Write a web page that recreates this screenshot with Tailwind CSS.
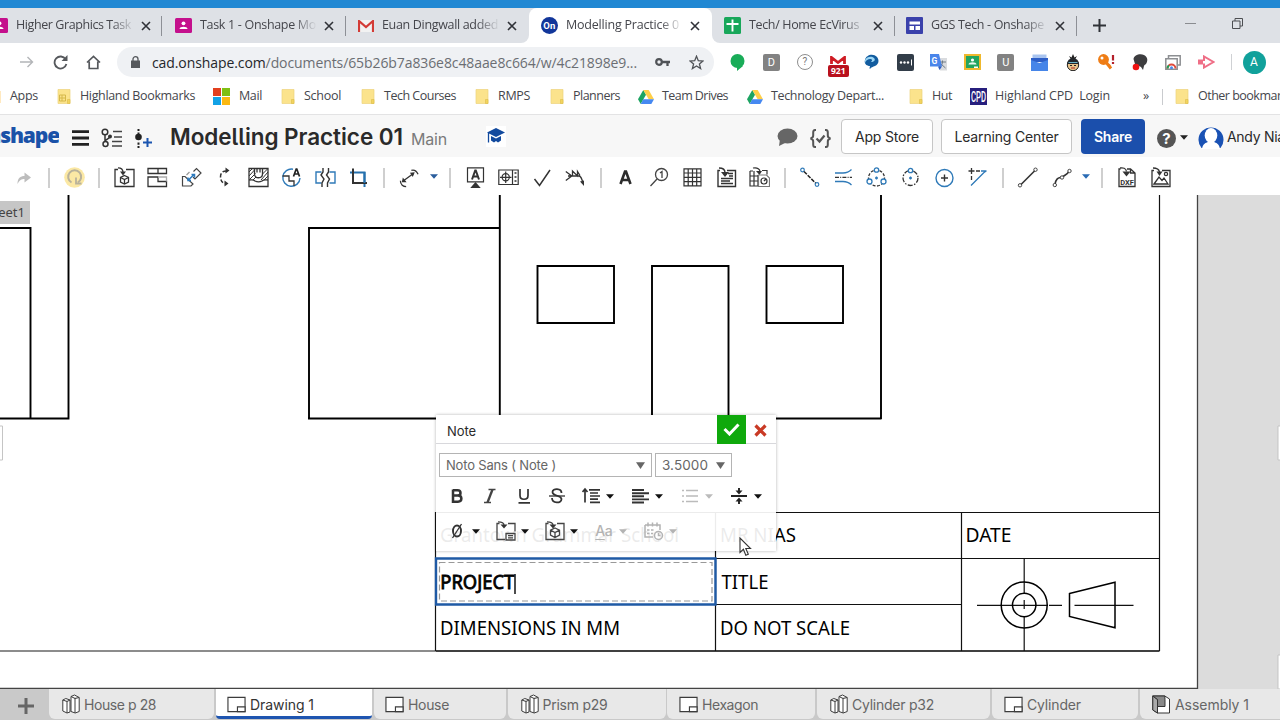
<!DOCTYPE html>
<html lang="en">
<head>
<meta charset="utf-8">
<title>Modelling Practice 01</title>
<script src="https://cdn.jsdelivr.net/npm/@tailwindcss/browser@4"></script>
</head>
<body class="w-[1280px] h-[720px] overflow-hidden bg-white flex flex-col font-['Open_Sans','Noto_Sans',sans-serif] text-[#45464c]">

<svg class="hidden">
  <defs>
    <symbol id="x" viewBox="0 0 10 10"><path d="M1 1l8 8M9 1L1 9" stroke="#303238" stroke-width="1.6" fill="none"/></symbol>
    <symbol id="folder" viewBox="0 0 14 16"><path d="M1 .5h12v14H1z" fill="#fbe38c" stroke="#ecd27c" stroke-width=".7"/><path d="M10.500 10.500h2.500v4h-2.500z" fill="#f3d45e" stroke="#dcbc4a" stroke-width=".6"/></symbol>
    <symbol id="drive" viewBox="0 0 16 14"><path d="M5.300 0L0 9.300 2.700 14 8 4.700z" fill="#1da462"/><path d="M5.300 0h5.400L16 9.300h-5.300z" fill="#ffcf48"/><path d="M5.300 9.300H16L13.300 14H2.700z" fill="#4688f1"/></symbol>
    <symbol id="caret" viewBox="0 0 8 5"><path d="M0 .3h8L4 4.700z" fill="currentColor"/></symbol>
    <symbol id="classroom" viewBox="0 0 17 15"><rect width="17" height="15" rx="1.500" fill="#c4108c"/><circle cx="8.500" cy="5.300" r="1.900" fill="#fff"/><path d="M4.500 11c0-3 8-3 8 0z" fill="#fff"/></symbol>
    <symbol id="sheet" viewBox="0 0 20 17"><path d="M1 1h18v15H1z" fill="#fff" stroke="#3c3c3c" stroke-width="1.200"/><path d="M11 16v-5h8v5z" fill="#fff" stroke="#3c3c3c" stroke-width="1.200"/></symbol>
    <symbol id="parts" viewBox="0 0 18 20"><path d="M.8 6l3-1.500L8 6v12l-3 1-4.200-2zM.8 6L5 7.500 8 6M5 7.500V19" fill="#fff" stroke="#3c3c3c"/><path d="M9 2.500L12.500 1 17.200 3.500v14l-4 1.500L9 17.500zM9 2.500l4 2 4.200-1M13 4.500V19" fill="#fff" stroke="#3c3c3c"/></symbol>
  </defs>
</svg>

<!-- window edge -->
<div class="h-[8px] shrink-0 bg-[#2188d3]"></div>

<!-- tab strip -->
<div class="h-[35px] shrink-0 bg-[#dee1e6] flex text-[12.5px]">
  <div class="w-[163px] flex items-center relative border-r border-transparent">
    <svg class="w-[17px] h-[15px] -ml-[9px] shrink-0"><use href="#classroom"/></svg>
    <div class="ml-2 w-[119px] overflow-hidden whitespace-nowrap [mask-image:linear-gradient(90deg,#000_80%,transparent_100%)]"><span data-w="115">Higher Graphics Task</span></div>
    <svg class="w-[10px] h-[10px] ml-[6px] shrink-0"><use href="#x"/></svg>
    <div class="ml-auto w-px h-5 bg-[#8d9096]"></div>
  </div>
  <div class="w-[183px] flex items-center">
    <svg class="w-[17px] h-[15px] ml-[12px] shrink-0"><use href="#classroom"/></svg>
    <div class="ml-2 w-[117px] overflow-hidden whitespace-nowrap [mask-image:linear-gradient(90deg,#000_80%,transparent_100%)]"><span data-w="116">Task 1 - Onshape Mo</span></div>
    <svg class="w-[10px] h-[10px] ml-[7px] shrink-0"><use href="#x"/></svg>
    <div class="ml-auto w-px h-5 bg-[#8d9096]"></div>
  </div>
  <div class="w-[183px] flex items-center bg-white">
   <div class="w-full h-full flex items-center bg-[#dee1e6] rounded-br-[8px]">
    <svg class="w-[16px] h-[12px] ml-[12px] shrink-0" viewBox="0 0 16 12"><path d="M0 0h16v12H0z" fill="#f2f2f2"/><path d="M1 12V1l7 6 7-6v11" fill="none" stroke="#d33b36" stroke-width="2.200"/></svg>
    <div class="ml-2 w-[118px] overflow-hidden whitespace-nowrap [mask-image:linear-gradient(90deg,#000_80%,transparent_100%)]"><span data-w="116">Euan Dingwall added</span></div>
    <svg class="w-[10px] h-[10px] ml-[7px] shrink-0"><use href="#x"/></svg>
   </div>
  </div>
  <div class="w-[183px] flex items-center bg-white rounded-t-[8px]">
    <svg class="w-[17px] h-[17px] ml-[12px] shrink-0" viewBox="0 0 17 17"><circle cx="8.500" cy="8.500" r="8.500" fill="#12369a"/><text x="8.300" y="12" text-anchor="middle" font-family="Roboto" font-weight="700" font-size="9.500" fill="#fff">On</text></svg>
    <div class="ml-[8px] w-[117px] overflow-hidden whitespace-nowrap [mask-image:linear-gradient(90deg,#000_80%,transparent_100%)]"><span data-w="113">Modelling Practice 0</span></div>
    <svg class="w-[10px] h-[10px] ml-[7px] shrink-0"><use href="#x"/></svg>
  </div>
  <div class="w-[183px] flex items-center bg-white">
   <div class="w-full h-full flex items-center bg-[#dee1e6] rounded-bl-[8px]">
    <svg class="w-[17px] h-[17px] ml-[12px] shrink-0" viewBox="0 0 17 17"><rect width="17" height="17" rx="1.500" fill="#18a75a"/><path d="M2.500 7h12M8.500 2.500v12" stroke="#fff" stroke-width="1.900"/></svg>
    <div class="ml-[8px] w-[117px] overflow-hidden whitespace-nowrap [mask-image:linear-gradient(90deg,#000_80%,transparent_100%)]"><span data-w="110">Tech/ Home EcVirus</span></div>
    <svg class="w-[10px] h-[10px] ml-[7px] shrink-0"><use href="#x"/></svg>
    <div class="ml-auto w-px h-5 bg-[#8d9096]"></div>
   </div>
  </div>
  <div class="w-[182px] flex items-center">
    <svg class="w-[17px] h-[17px] ml-[11px] shrink-0" viewBox="0 0 17 17"><rect width="17" height="17" rx="1" fill="#3a41ab"/><path d="M3.500 4.500h10.500v3H3.500zM3.500 9h4.500v4H3.500zM9.500 9h4.500v4H9.500z" fill="#fff"/></svg>
    <div class="ml-[8px] w-[117px] overflow-hidden whitespace-nowrap [mask-image:linear-gradient(90deg,#000_80%,transparent_100%)]"><span data-w="113">GGS Tech - Onshape</span></div>
    <svg class="w-[10px] h-[10px] ml-[7px] shrink-0"><use href="#x"/></svg>
    <div class="ml-auto w-px h-5 bg-[#8d9096]"></div>
  </div>
  <div class="flex-1 flex items-center">
    <svg class="w-[13px] h-[13px] ml-[16px]" viewBox="0 0 13 13"><path d="M6.500 0v13M0 6.500h13" stroke="#2f3237" stroke-width="2"/></svg>
    <svg class="w-[11px] h-[12px] ml-[79px]" viewBox="0 0 11 12"><path d="M0 3.500h11" stroke="#8a8c90"/></svg>
    <svg class="w-[11px] h-[11px] ml-[36px] mb-[5px]" viewBox="0 0 11 11"><path d="M.5 3h7.500v7.500H.5zM3 3V.5h7.500V8H8" fill="none" stroke="#4c4e52"/></svg>
  </div>
</div>

<!-- address bar -->
<div class="h-[38px] shrink-0 bg-white flex items-center">
  <svg class="w-[14px] h-[12px] ml-[20px]" viewBox="0 0 14 12"><path d="M0 6h12.500M7.500 1l5 5-5 5" fill="none" stroke="#b3b5b8" stroke-width="1.400"/></svg>
  <svg class="w-[15px] h-[15px] ml-[19px]" viewBox="0 0 15 15"><path d="M12.600 4.200A6 6 0 1 0 13.400 9" fill="none" stroke="#55585c" stroke-width="1.800"/><path d="M14.500 0v6H8.500z" fill="#55585c"/></svg>
  <svg class="w-[15px] h-[15px] ml-[18px]" viewBox="0 0 15 15"><path d="M1 7.500L7.500 1.500l6.500 6M3.200 6.500V13.500h8.600v-7" fill="none" stroke="#55585c" stroke-width="1.700"/></svg>
  <div class="ml-[16px] w-[597px] h-[30px] rounded-full bg-[#eff1f4] flex items-center shrink-0">
    <svg class="w-[9px] h-[12px] ml-[14px]" viewBox="0 0 9 12"><path d="M0 4.500h9V12H0z" fill="#55585c"/><path d="M2 5V3a2.500 2.300 0 0 1 5 0v2" fill="none" stroke="#55585c" stroke-width="1.300"/></svg>
    <div class="ml-[12px] w-[490px] text-[14px] text-[#6b6e73] whitespace-nowrap"><span data-w="485"><b class="font-normal text-[#24262a]">cad.onshape.com</b>/documents/65b26b7a836e8c48aae8c664/w/4c21898e9...</span></div>
    <svg class="w-[15px] h-[10px] ml-[13px]" viewBox="0 0 15 10"><circle cx="4" cy="5" r="2.800" fill="none" stroke="#505357" stroke-width="2.200"/><path d="M7 5h8M12.500 5v4" stroke="#505357" stroke-width="2.300"/></svg>
    <svg class="w-[15px] h-[15px] ml-[19px]" viewBox="0 0 15 15"><path d="M7.500 1.200l1.800 4.500 4.700.3-3.600 3 1.200 4.600-4.100-2.600-4.100 2.600L4.600 9 1 6l4.700-.3z" fill="none" stroke="#505357" stroke-width="1.300"/></svg>
  </div>
  <div class="ml-[7px] flex items-center text-[11px] text-white *:shrink-0">
    <div class="w-[33.5px] flex justify-center"><svg class="w-[15px] h-[17px]" viewBox="0 0 15 17"><circle cx="7.500" cy="7" r="7" fill="#19ac58"/><path d="M7 12h6l-6 5z" fill="#19ac58"/></svg></div>
    <div class="w-[33.5px] flex justify-center"><div class="size-[17px] bg-[#828282] rounded-[2px] grid place-items-center font-['Roboto'] leading-none">D</div></div>
    <div class="w-[33.5px] flex justify-center"><div class="size-[16px] border-[1.500px] border-[#8e8e8e] text-[#777] rounded-full grid place-items-center font-['Roboto'] text-[10px] leading-none">?</div></div>
    <div class="w-[33.5px] flex flex-col items-center pt-[8px]"><svg class="w-[16px] h-[8px]" viewBox="0 0 16 8"><path d="M1.500 8V1.500L8 6.500l6.500-5V8" fill="none" stroke="#cf1c24" stroke-width="2.800"/></svg><div class="w-[21px] h-[12px] bg-[#b9111d] rounded-[2px] text-[8.500px] font-bold text-center leading-[12px] font-['Open_Sans'] mt-px">921</div></div>
    <div class="w-[33.5px] flex justify-center"><svg class="w-[15px] h-[16px]" viewBox="0 0 15 16"><path d="M1 6C2 1 9-1 13 3c3 4 1 8-2 9-2 1-4 1-5 3-1-1 0-2 0-3-4 0-6-3-5-6z" fill="#125c9f"/><path d="M1 6c2-4 7-4 9-2s0 4-3 4c2-2 1-3-1-3S2 6 1 9z" fill="#9bd6f5"/></svg></div>
    <div class="w-[33.5px] flex justify-center"><svg class="size-[17px]" viewBox="0 0 17 17"><rect width="17" height="17" rx="2" fill="#323d49"/><circle cx="4" cy="8.500" r="1.200" fill="#fff"/><circle cx="7.500" cy="8.500" r="1.200" fill="#fff"/><circle cx="11" cy="8.500" r="1.200" fill="#fff"/><path d="M14.500 5.500v6" stroke="#fff"/></svg></div>
    <div class="w-[33.5px] flex justify-center"><svg class="size-[17px]" viewBox="0 0 17 17"><path d="M7 4h10v12.500H10z" fill="#d9dbde"/><path d="M9 8h7M12.500 6.500V8c0 3-2 4-3.500 5M11 10l4.500 4" stroke="#6f7a85" fill="none"/><path d="M0 0h9l3 12.500H0z" fill="#4a85ea"/><path d="M8 12.500h4L9.500 16z" fill="#2f5fc4"/><text x="1.500" y="9.500" font-family="Roboto" font-weight="700" font-size="8.500" fill="#fff">G</text></svg></div>
    <div class="w-[33.5px] flex justify-center"><svg class="w-[17px] h-[16px]" viewBox="0 0 17 16"><path d="M0 0h17v16H0z" fill="#efb82d"/><path d="M2 2h13v12H2z" fill="#22a45f"/><circle cx="8.500" cy="6" r="1.600" fill="#fff"/><path d="M4.500 10.500c0-3 8-3 8 0z" fill="#e8f6ee"/><path d="M10 12.500h4v1.500h-4z" fill="#fff"/></svg></div>
    <div class="w-[33.5px] flex justify-center"><div class="size-[17px] bg-[#828282] rounded-[2px] grid place-items-center font-['Roboto'] leading-none">U</div></div>
    <div class="w-[33.5px] flex justify-center"><svg class="w-[17px] h-[17px]" viewBox="0 0 17 17"><path d="M1.500 .5h14v4h-14z" fill="#a9c4ef"/><path d="M0 4h17v4H0z" fill="#2e5fc7"/><path d="M0 6l8.500 3L17 6v11H0z" fill="#4685e8"/></svg></div>
    <div class="w-[33.5px] flex justify-center"><svg class="w-[14px] h-[17px]" viewBox="0 0 14 17"><path d="M3 2l2.500 1.500L7 0l1.500 3.500L11 2 9 5.500H5z" fill="#222"/><circle cx="7" cy="11" r="5.700" fill="#e9c48b" stroke="#222"/><path d="M1 10a6 6 0 0 1 12 0z" fill="#23262a"/><path d="M2.500 8.500h9" stroke="#6bb3c8"/><path d="M5 14h4" stroke="#b02a20"/><path d="M4 11.500h2M8 11.500h2" stroke="#222"/></svg></div>
    <div class="w-[33.5px] flex justify-center"><svg class="w-[17px] h-[16px]" viewBox="0 0 17 16"><circle cx="5.500" cy="5.500" r="5.400" fill="#ef7d16"/><circle cx="4" cy="4" r="1.500" fill="#fff"/><path d="M7 7l6 7.500M10 13l2.500-2" stroke="#ef7d16" stroke-width="3"/><path d="M15 1v5.500M15 8v2" stroke="#b4202b" stroke-width="2.200"/></svg></div>
    <div class="w-[33.5px] flex justify-center"><svg class="w-[16px] h-[17px]" viewBox="0 0 16 17"><path d="M1.500 5C2 1 8-1 12 1c4 2 4 6 2 9-1 1-2 1-2 2l-1 4-2-3-6-3z" fill="#3d3d3f"/><circle cx="4" cy="13" r="3.300" fill="#ee1111"/></svg></div>
    <div class="w-[33.5px] flex justify-center"><svg class="w-[16px] h-[15px]" viewBox="0 0 16 15"><path d="M3.500 3V.8h11.700V10H13" fill="none" stroke="#8d8f92" stroke-width="1.500"/><path d="M.8 3.800h11.400v10.400H.8z" fill="#fff" stroke="#8d8f92" stroke-width="1.500"/><path d="M2.500 13.500a4 4 0 0 1 8 0" fill="none" stroke="#de4b3e" stroke-width="2"/><path d="M2.500 13.500q0-2 1.500-3" fill="none" stroke="#1ea05a" stroke-width="2"/><circle cx="6.500" cy="12.800" r="1.500" fill="#4b86e8"/></svg></div>
    <div class="w-[33.5px] flex justify-center"><svg class="w-[17px] h-[14px]" viewBox="0 0 17 14"><path d="M0 4.500h5v5H0z" fill="#ef6f87"/><path d="M6 6V1.500l9.500 5.500L6 12.500V8.500" fill="none" stroke="#ef6f87" stroke-width="2"/></svg></div>
    <div class="w-px h-[16px] bg-[#cfd1d4] ml-[7px]"></div>
    <div class="ml-[11px] size-[23px] rounded-full bg-[#11a19b] grid place-items-center text-[12px] font-['Roboto'] leading-none">A</div>
  </div>
</div>

<!-- bookmarks -->
<div class="h-[34px] pb-[2px] shrink-0 bg-white flex items-center text-[12.5px] whitespace-nowrap border-b border-[#e3e3e4] *:shrink-0 *:flex *:items-center">
  <div class="w-[57px]"><span class="w-[1px] h-[12px] bg-[#ffe9c0] mr-[9px]"></span><span data-w="28">Apps</span></div>
  <div class="w-[156px]"><svg class="w-[14px] h-[16px] mr-[9px]" viewBox="0 0 14 16"><path d="M1 .5h12v14H1z" fill="#fbe38c" stroke="#ecd27c" stroke-width=".7"/><path d="M2.500 6h6v6h-6zM2.500 9h6M5 6v6" fill="none" stroke="#d5b84a"/><path d="M10.500 10.500h2.500v4h-2.500z" fill="#f3d45e" stroke="#dcbc4a" stroke-width=".6"/></svg><span data-w="115">Highland Bookmarks</span></div>
  <div class="w-[68px]"><svg class="w-[17px] h-[17px] mr-[9px]" viewBox="0 0 17 17"><path d="M0 0h8v8H0z" fill="#e2401f"/><path d="M9 0h8v8H9z" fill="#7fbf13"/><path d="M0 9h8v8H0z" fill="#12a2e6"/><path d="M9 9h8v8H9z" fill="#fbb912"/></svg><span data-w="23">Mail</span></div>
  <div class="w-[80px]"><svg class="w-[14px] h-[16px] mr-[9px]"><use href="#folder"/></svg><span data-w="37">School</span></div>
  <div class="w-[114px]"><svg class="w-[14px] h-[16px] mr-[9px]"><use href="#folder"/></svg><span data-w="72">Tech Courses</span></div>
  <div class="w-[75px]"><svg class="w-[14px] h-[16px] mr-[9px]"><use href="#folder"/></svg><span data-w="32">RMPS</span></div>
  <div class="w-[88px]"><svg class="w-[14px] h-[16px] mr-[9px]"><use href="#folder"/></svg><span data-w="47">Planners</span></div>
  <div class="w-[109px]"><svg class="w-[16px] h-[14px] mr-[8px]"><use href="#drive"/></svg><span data-w="66">Team Drives</span></div>
  <div class="w-[162px]"><svg class="w-[16px] h-[14px] mr-[8px]"><use href="#drive"/></svg><span data-w="113">Technology Depart...</span></div>
  <div class="w-[61px]"><svg class="w-[14px] h-[16px] mr-[9px]"><use href="#folder"/></svg><span data-w="20">Hut</span></div>
  <div class="w-[173px]"><svg class="w-[17px] h-[17px] mr-[8px]" viewBox="0 0 17 17"><path d="M0 0h17v17H0z" fill="#271f7d"/><text x="1" y="14" textLength="15" lengthAdjust="spacingAndGlyphs" font-family="Roboto" font-size="15" font-weight="500" fill="#fff">CPD</text></svg><span data-w="115">Highland CPD  Login</span></div>
  <div class="w-[19px]"><span data-w="7">»</span></div>
  <div class="w-[13px]"><span class="w-px h-[16px] bg-[#c9cbce]"></span></div>
  <div class="w-[120px]"><svg class="w-[14px] h-[16px] mr-[9px]"><use href="#folder"/></svg><span data-w="95">Other bookmarks</span></div>
</div>

<!-- document header -->
<div class="h-[42px] shrink-0 bg-[#f7f7f7] flex items-center font-['Inter',sans-serif] text-[#2a2a2a] *:shrink-0 whitespace-nowrap">
  <div class="w-[59px] h-[30px] overflow-hidden flex justify-end items-center font-['Open_Sans'] font-extrabold text-[21px] leading-none text-[#1a52a8] pb-[2px]"><span class="leading-[28px]" data-w="84">onshape</span></div>
  <svg class="w-[17px] h-[16px] ml-[13px] mt-[4px]" viewBox="0 0 17 16"><path d="M0 1.700h17M0 8h17M0 14.300h17" stroke="#222" stroke-width="2.800"/></svg>
  <svg class="w-[22px] h-[20px] ml-[12px] mt-[4px]" viewBox="0 0 22 20"><circle cx="4" cy="4" r="2.800" fill="none" stroke="#333" stroke-width="1.500"/><path d="M4 7v7M9 8c0 4-5 2-5 6" fill="none" stroke="#333" stroke-width="1.500"/><circle cx="4.500" cy="16" r="2.500" fill="none" stroke="#333" stroke-width="1.500"/><circle cx="9" cy="8.500" r="2" fill="#333"/><path d="M12 3.500h9M13 9h8M11 13.500h10M11 18h10" stroke="#444" stroke-width="1.500"/></svg>
  <svg class="w-[17px] h-[20px] ml-[12px] mt-[6px]" viewBox="0 0 17 20"><circle cx="3.500" cy="8" r="3.300" fill="#222"/><path d="M3.500 0v2M3.500 3.500v4M3.500 13.500v2.300M3.500 17v2" stroke="#222" stroke-width="2"/><path d="M12.500 9v9M8 13.500h9" stroke="#1b55b0" stroke-width="2"/></svg>
  <div class="w-[241px] ml-[18px] text-[22.5px] font-semibold leading-none [font-feature-settings:'cv05'] pt-[3px]"><span data-w="233">Modelling Practice 01</span></div>
  <div class="w-[75px] text-[16px] text-[#7a7a7a] pt-[6px] leading-none"><span data-w="36">Main</span></div>
  <div class="w-[20px] h-[21px] bg-white grid place-items-center"><svg class="w-[18px] h-[16px]" viewBox="0 0 18 16"><path d="M9 0l9 4.500L9 9 0 4.500z" fill="#124a9e"/><path d="M4 8l5 2.500L14 8v4.500l-3 2-2-1.500-2 1.500-3-2z" fill="#124a9e"/><path d="M1.500 5v9.500" stroke="#124a9e" stroke-width="1.300"/></svg></div>
  <svg class="w-[21px] h-[19px] ml-[271px] mt-[3px]" viewBox="0 0 21 19"><ellipse cx="10.500" cy="8" rx="10" ry="7.500" fill="#666"/><path d="M3 11l-1 7 8-4z" fill="#666"/></svg>
  <svg class="w-[21px] h-[19px] ml-[12px] mt-[4px]" viewBox="0 0 21 19"><path d="M6 1H5C3.500 1 3.200 2 3.200 3.500v3C3.200 8 2.500 9 .5 9.500c2 .5 2.700 1.500 2.700 3v3C3.200 17 3.500 18 5 18h1M15 1h1c1.500 0 1.800 1 1.800 2.500v3c0 1.500.7 2.500 2.700 3-2 .5-2.700 1.500-2.700 3v3c0 1.500-.3 2.500-1.800 2.500h-1" fill="none" stroke="#555" stroke-width="2"/><path d="M6.500 9.500l3 3 5-6" fill="none" stroke="#555" stroke-width="2.200"/></svg>
  <div class="ml-[10px] w-[92px] h-[35px] border border-[#c6c6c6] rounded-[4px] bg-white grid place-items-center text-[14px]"><span data-w="64">App Store</span></div>
  <div class="ml-[8px] w-[131px] h-[35px] border border-[#c6c6c6] rounded-[4px] bg-white grid place-items-center text-[14px]"><span data-w="104">Learning Center</span></div>
  <div class="ml-[9px] w-[64px] h-[35px] rounded-[4px] bg-[#1b4fac] text-white font-semibold grid place-items-center text-[14px]"><span data-w="38">Share</span></div>
  <div class="ml-[12px] size-[19px] rounded-full bg-[#555] text-white font-bold text-[15px] grid place-items-center leading-none mt-[5px]">?</div>
  <svg class="w-[8px] h-[5px] ml-[4px] mt-[3px] text-[#222]"><use href="#caret"/></svg>
  <svg class="w-[26px] h-[24px] ml-[10px] mt-[2px]" viewBox="0 0 26 24"><path d="M3.500 23a12.500 12.500 0 1 1 19 0z" fill="#1a52b4"/><ellipse cx="13" cy="10.500" rx="6.300" ry="7.500" fill="#fff"/><path d="M4 24c1-6 4-6 6-7h6c2 1 5 1 6 7z" fill="#fff"/></svg>
  <div class="ml-[3px] text-[14px]"><span data-w="65">Andy Nias</span></div>
</div>

<!-- drawing tools -->
<div class="h-[38px] shrink-0 bg-white flex items-center pl-[7.500px] pt-[3px] *:shrink-0 *:flex *:justify-center text-[#333]">
  <div class="w-[33.500px]"><svg class="size-[20px]" viewBox="0 0 20 20" fill="none"><path d="M3.500 16c0-6 3-8 7-8V4.500L17 9.500l-6.500 5V11c-3 0-5 1-7 5z" fill="#bdbdbd"/></svg></div>
  <div class="w-[16.500px]"><span class="w-[2px] h-[20px] bg-[#cfcfcf]"></span></div>
  <div class="w-[33.500px]"><svg class="size-[21px]" viewBox="0 0 21 21" fill="none"><circle cx="10.500" cy="10.500" r="10.300" fill="#fbe8a4"/><path d="M7.500 15.500a6.500 6.500 0 1 1 6.300 0" stroke="#b9b29b" stroke-width="2"/><path d="M12 10.500v6h5.500" stroke="#b9b29b" stroke-width="1.800"/></svg></div>
  <div class="w-[16.500px]"><span class="w-[2px] h-[20px] bg-[#cfcfcf]"></span></div>
  <div class="w-[33.500px]"><svg class="size-[21px]" viewBox="0 0 21 21" fill="none" stroke="#333" stroke-width="1.300"><path d="M4 2.500H1V19.500h19V2.500h-8"/><path d="M10.500 8.500l4 2v4.500l-4 2-4-2v-4.500zM6.500 10.500l4 2 4-2M10.500 12.500V17"/><path d="M4 .8c3 0 5 1 5 4.500"/><path d="M6 4.500h6L9 8.500z" fill="#333" stroke="none"/></svg></div>
  <div class="w-[33.500px]"><svg class="size-[21px]" viewBox="0 0 21 21" fill="none" stroke="#333" stroke-width="1.300"><path d="M1 1.500h18.500v5H1zM11 1.500v5M19.500 14.500H11V10H1v9.500h18.500z"/><path d="M11 10h8.500v4.500" stroke="#aaa"/></svg></div>
  <div class="w-[33.500px]"><svg class="size-[21px]" viewBox="0 0 21 21" fill="none" stroke="#444" stroke-width="1.200"><path d="M12.500 4.500l3-3 4.500 4.500-6 6-2-2M1.500 9.500v9.500h8.500l2-2L4 9.500z"/><path d="M5.500 8l3-3" stroke="#999"/><path d="M7.500 13l5.500-5.500M7 10.500v3h3M10.500 7.500h3v3" stroke="#2a79bd" stroke-width="1.500"/></svg></div>
  <div class="w-[33.500px]"><svg class="size-[21px]" viewBox="0 0 21 21" fill="none" stroke="#333" stroke-width="1.500"><path d="M12.500 4C8 4 6.500 6.500 6.500 10s2 6.500 5 6.500" stroke-dasharray="4 2"/><path d="M11.500.5l4 3-4 3zM10.500 13.500l4 3-4 3z" fill="#333" stroke="none"/></svg></div>
  <div class="w-[33.500px]"><svg class="size-[21px]" viewBox="0 0 21 21" fill="none" stroke="#333" stroke-width="1.300"><path d="M1 1.500h19v18H1zM1 13c3 0 4-1 6 1 2 1 5 1 7 0 2-2 4-1 6-1"/><path d="M6.500 1.500V7c0 5 8 5 8 0V1.500M9 1.500v4M12 1.500v4"/><path d="M1 5l3.500-3.500M1 9l5.500-6M1.500 12.500l6-6M5 13l3-3M13 13l7-8M14.500 7l5-5M16 13l4-4" stroke-width="1"/></svg></div>
  <div class="w-[33.500px]"><svg class="size-[21px]" viewBox="0 0 21 21" fill="none"><path d="M12 2.200A8.600 8.600 0 1 0 19 11" stroke="#2f7ab8" stroke-width="1.400"/><path d="M1.500 9H8v5h5v5" stroke="#333" stroke-width="1.300"/><path d="M12.500 9.500L15.200 2h.6l2.700 7.500M13.500 7h4.500" stroke="#222" stroke-width="1.700"/></svg></div>
  <div class="w-[33.500px]"><svg class="size-[21px]" viewBox="0 0 21 21" fill="none"><path d="M6.500 5H1v11h5.500M14.500 5H20v11h-5.500" stroke="#2f7ab8" stroke-width="1.400"/><path d="M8 1v4l-2 3 3 4-2 4v4M13.500 1v4l-2 3 3 4-2 4v4" stroke="#333" stroke-width="1.400"/></svg></div>
  <div class="w-[33.500px]"><svg class="size-[21px]" viewBox="0 0 21 21" fill="none" stroke-width="2"><path d="M2 5.500h14.500V20" stroke="#2570ad"/><path d="M5 1.500V16h14" stroke="#333"/><path d="M16.500 5v11" stroke="#2570ad"/></svg></div>
  <div class="w-[16.500px]"><span class="w-[2px] h-[20px] bg-[#cfcfcf]"></span></div>
  <div class="w-[33.500px]"><svg class="size-[20px]" viewBox="0 0 21 21" fill="none" stroke="#333" stroke-width="1.400"><path d="M4 14L15.500 5.500M13 2.500c3-1 5 0 7 4M1.500 13.500c0 4 3 6 6 6"/><path d="M3 15l1-5 4 5zM16.500 4.500l-5 .5 3 4.500z" fill="#333" stroke="none"/></svg></div>
  <div class="w-[16.250px] self-center"><svg class="w-[8px] h-[5px] -mt-[3px] text-[#2a5d9c]"><use href="#caret"/></svg></div>
  <div class="w-[16.500px]"><span class="w-[2px] h-[20px] bg-[#cfcfcf]"></span></div>
  <div class="w-[33.500px]"><svg class="size-[21px]" viewBox="0 0 21 21" fill="none" stroke="#333" stroke-width="1.200"><path d="M2.500.8h16v14h-16z"/><path d="M7 12.500L10.200 3.500h.6L14 12.500M8 9.500h5" stroke-width="2"/><path d="M10.500 16l4 4.500h-8z" fill="#333"/></svg></div>
  <div class="w-[33.500px]"><svg class="size-[21px]" viewBox="0 0 21 21" fill="none" stroke="#333" stroke-width="1.200"><path d="M.8 3h19.400v14.500H.8zM14.500 3v14.500"/><circle cx="7.700" cy="10.300" r="3.600"/><path d="M2 10.300h11.500M7.700 4.500v11.500"/><path d="M16.500 6h2M16.500 10h2M16.500 14h2" stroke-width="1.500"/></svg></div>
  <div class="w-[33.500px]"><svg class="size-[21px]" viewBox="0 0 21 21" fill="none" stroke="#333" stroke-width="1.500"><path d="M2.500 12l5 6.500L18 3"/></svg></div>
  <div class="w-[33.500px]"><svg class="size-[21px]" viewBox="0 0 21 21" fill="none" stroke="#333" stroke-width="1.300"><path d="M.8 4.500l6 4.500-6 4.500M3 9H14c2 0 3 3 4 7M7.500 9V4l5 5V4.500l2.500 4"/><path d="M15 14.500l4-1V19z" fill="#333" stroke="none"/></svg></div>
  <div class="w-[16.500px]"><span class="w-[2px] h-[20px] bg-[#cfcfcf]"></span></div>
  <div class="w-[33.500px]"><svg class="size-[21px]" viewBox="0 0 21 21" fill="none" stroke="#2c2c2c" stroke-width="2.600"><path d="M5.500 17L10 4.500h1L15.500 17M7 13h7"/></svg></div>
  <div class="w-[33.500px]"><svg class="size-[21px]" viewBox="0 0 21 21" fill="none" stroke="#444" stroke-width="1.300"><circle cx="12.500" cy="7.500" r="6"/><path d="M8 12l-6.500 7M11 6l2-1.500V11"/></svg></div>
  <div class="w-[33.500px]"><svg class="size-[21px]" viewBox="0 0 21 21" fill="none" stroke="#333" stroke-width="1.200"><path d="M2 1.800h17v17H2zM6.200 1.800v17M10.500 1.800v17M14.700 1.800v17M2 6h17M2 10.300h17M2 14.600h17"/></svg></div>
  <div class="w-[33.500px]"><svg class="size-[21px]" viewBox="0 0 21 21" fill="none" stroke="#333" stroke-width="1.400"><path d="M4 3.500H2V19.500h17.500V3.500H11"/><path d="M3 1c4 0 6 1 6 4.500"/><path d="M5 5h8l-4 5z" fill="#333" stroke="none"/><path d="M12 6.500h5M13 9h4M5 11.500h12M5 14h9M5 16.500h12" stroke-width="1.500"/></svg></div>
  <div class="w-[33.500px]"><svg class="size-[21px]" viewBox="0 0 21 21" fill="none" stroke="#333" stroke-width="1.200"><path d="M1 4v15h8M1 9h8M1 14h8M5 4v15M9 8v11M13 3.500h5v4M1 4h3"/><path d="M4 1c3-.5 6 0 7 3"/><path d="M7 4h6l-2.500 4z" fill="#333" stroke="none"/><path d="M9.500 8h8l3 3v8.500h-11z" fill="#fff" stroke="#777"/><circle cx="15" cy="14" r="3"/><path d="M15 14l2-2" stroke-width="1.500"/></svg></div>
  <div class="w-[16.500px]"><span class="w-[2px] h-[20px] bg-[#cfcfcf]"></span></div>
  <div class="w-[33.500px]"><svg class="size-[21px]" viewBox="0 0 21 21" fill="none" stroke="#2f7ab8" stroke-width="1.200"><circle cx="3.500" cy="3" r="1.800"/><circle cx="18" cy="17.500" r="1.800"/><path d="M5 4.500l11.500 11.500" stroke="#222" stroke-width="1.500" stroke-dasharray="4 1.200"/></svg></div>
  <div class="w-[33.500px]"><svg class="size-[21px]" viewBox="0 0 21 21" fill="none" stroke="#2f7ab8" stroke-width="1.300"><path d="M2 6h8c4 0 6-1 8.500-3.500M2 14.500h8c4 0 6 1 8.500 3.500"/><path d="M2 10.300h17" stroke="#333" stroke-dasharray="4 1.200 1 1.200"/></svg></div>
  <div class="w-[34px]"><svg class="size-[21px]" viewBox="0 0 21 21" fill="none" stroke="#2f7ab8" stroke-width="1.300"><circle cx="10.500" cy="11" r="8" stroke="#333" stroke-dasharray="3 1.500"/><g fill="#fff"><circle cx="10.500" cy="3" r="2.200"/><circle cx="3.500" cy="14.500" r="2.500"/><circle cx="17.500" cy="14.500" r="2.500"/></g><path d="M10.500 9.500v3M9 11h3"/></svg></div>
  <div class="w-[33.500px]"><svg class="size-[21px]" viewBox="0 0 21 21" fill="none" stroke="#2f7ab8" stroke-width="1.300"><circle cx="10.500" cy="11" r="7.500" stroke="#333" stroke-dasharray="5 1.500 1.500 1.500"/><circle cx="10.500" cy="3.500" r="2.200" fill="#fff"/><path d="M10.500 9.500v3M9 11h3"/></svg></div>
  <div class="w-[33.500px]"><svg class="size-[21px]" viewBox="0 0 21 21" fill="none"><circle cx="10.500" cy="11" r="8.500" stroke="#2f7ab8" stroke-width="1.400"/><path d="M10.500 7.500v7M7 11h7" stroke="#333" stroke-width="1.400"/></svg></div>
  <div class="w-[33.500px]"><svg class="size-[21px]" viewBox="0 0 21 21" fill="none" stroke-width="1.300"><path d="M4.500 1v6M1.500 4h6M9 4h4M4.500 9v4" stroke="#333"/><path d="M4 18.500L16 6.500c1-1 2-2.500 3.500-2.500H14" stroke="#2f7ab8"/></svg></div>
  <div class="w-[16.500px]"><span class="w-[2px] h-[20px] bg-[#cfcfcf]"></span></div>
  <div class="w-[34px]"><svg class="size-[21px]" viewBox="0 0 21 21" fill="none" stroke="#333" stroke-width="1.600"><path d="M4 17.500L18 3.500"/><circle cx="3" cy="18.300" r="1.700" fill="#fff" stroke-width=".9"/><circle cx="18.500" cy="2.700" r="1.700" fill="#fff" stroke-width=".9"/></svg></div>
  <div class="w-[33.500px]"><svg class="size-[21px]" viewBox="0 0 21 21" fill="none" stroke="#333" stroke-width="1.600"><path d="M4 17.500c1-8 5-6 8-8s4-2 6-5"/><g fill="#fff" stroke-width=".9"><circle cx="3.800" cy="18" r="1.700"/><circle cx="11" cy="10.500" r="1.700"/><circle cx="18.500" cy="4" r="1.700"/></g></svg></div>
  <div class="w-[15px] self-center"><svg class="w-[8px] h-[5px] -mt-[3px] text-[#2a6bb4]"><use href="#caret"/></svg></div>
  <div class="w-[16.500px]"><span class="w-[2px] h-[20px] bg-[#cfcfcf]"></span></div>
  <div class="w-[33.500px]"><svg class="size-[21px]" viewBox="0 0 21 21" fill="none" stroke="#333" stroke-width="1.300"><path d="M4.500 2H3v17.500h16V6L14.500 2H11M14.500 2v4H19"/><path d="M4 1c3-.5 6 0 6.500 3.500"/><path d="M6.500 4.500h8l-4 5z" fill="#333" stroke="none"/><text x="4.300" y="17.800" textLength="13.500" font-family="Roboto" font-weight="700" font-size="7.500" fill="#333" stroke="none">DXF</text></svg></div>
  <div class="w-[33.500px]"><svg class="size-[21px]" viewBox="0 0 21 21" fill="none" stroke="#333" stroke-width="1.300"><path d="M4 3.500H2V19.500h18V3.500h-8"/><path d="M3 1c4 0 6 1 6.500 4"/><path d="M6.500 4.500h6l-3 4.500z" fill="#333" stroke="none"/><path d="M4 17l5-7 3 3.500 2-2.500 4 6z"/><circle cx="16" cy="7" r="1.600"/></svg></div>
</div>

<!-- sheet -->
<div class="relative flex-1 min-h-0 overflow-hidden">
  <svg class="block w-[1280px] h-[494px]" viewBox="0 195 1280 494" fill="none" stroke="#000" stroke-width="2">
    <path d="M1197 195h83v494h-83z" fill="#dcdcdc" stroke="none"/>
    <path d="M1197.500 195v494M0 688.500h1198" stroke="#444" stroke-width="1.300"/>
    <path d="M0 651h436" stroke="#666" stroke-width="1.600"/>
    <path d="M436 651h723.500" stroke-width="1.600"/>
    <path d="M1159.500 195v456" stroke="#111" stroke-width="1.200"/>
    <path d="M0 228h30.500v190M68.500 195v223.500H0M309 419V228h191M499.800 195v223M308 418.500h573.500M881 195v224M537.500 266h76.500v57h-76.500zM652 418V266h76.500v152M766.500 266H843v57h-76.500z" stroke-width="1.900"/>
    <g stroke="#111" stroke-width="1.200">
      <path d="M435.500 512.500h724M435.500 558.500h724M435.500 604.500h526M435.500 512v139M715.500 512v139M961.500 512v139"/>
      <path d="M1024.200 558v36M1024.200 600v9M1024.200 617v34M977 605.300h71M1049 605.300h13M1074.500 605.300h59"/>
    </g>
    <g stroke-width="1.500"><circle cx="1024.200" cy="605" r="23"/><circle cx="1024.200" cy="605" r="11.700"/><path d="M1069.500 593.500L1115 582.300v45.500l-45.500-11.300z"/></g>
    <path d="M-2 426h4.500v34H-2M1283 426h-5v34h5M1283 655h-5v34h5" fill="#fff" stroke="#c5c5c5" stroke-width="1"/>
    <g fill="#000" stroke="none" font-family="'Noto Sans'" font-size="19.200">
      <text x="440" y="542" textLength="239" lengthAdjust="spacingAndGlyphs">Grantown Grammar School</text>
      <text x="720" y="542" textLength="76" lengthAdjust="spacingAndGlyphs">MR NIAS</text>
      <text x="965.500" y="542" textLength="46" lengthAdjust="spacingAndGlyphs">DATE</text>
      <text x="721.500" y="588.500" textLength="47" lengthAdjust="spacingAndGlyphs">TITLE</text>
      <text x="440" y="634.500" textLength="180" lengthAdjust="spacingAndGlyphs">DIMENSIONS IN MM</text>
      <text x="720" y="634.500" textLength="130" lengthAdjust="spacingAndGlyphs">DO NOT SCALE</text>
      <text x="440.300" y="588.500" textLength="74" lengthAdjust="spacingAndGlyphs" stroke="#000" stroke-width=".8">PROJECT</text>
    </g>
    <path d="M515 574v20" stroke-width="1.400"/>
    <path d="M436 558.500h279.500v46H436z" stroke="#1f5aa5" stroke-width="2.400"/>
    <path d="M439.500 562.500h272.500v38.500H439.500z" stroke="#999" stroke-width="1.200" stroke-dasharray="6 3"/>
  </svg>
  <div class="absolute left-0 top-[6px] w-[30px] h-[23px] bg-[#c6c6c6] text-[#444] text-[13px] font-['Noto_Sans'] leading-[22px] flex justify-end pr-[5px]"><span data-w="42">Sheet1</span></div>

  <!-- note editor -->
  <div class="absolute left-[436px] top-[220px] w-[340px] h-[136px] bg-white/92 shadow-[0_0_3px_rgba(0,0,0,0.3)] flex flex-col font-['Inter',sans-serif] text-[#333]">
    <div class="h-[29px] flex items-stretch bg-white border-b border-[#d8d8dc]">
      <div class="w-[281px] pl-[11px] pt-[6px] flex items-center text-[13px] text-[#2a2a2a]"><span data-w="29">Note</span></div>
      <div class="w-[29px] h-[29px] bg-[#0fa90c] grid place-items-center"><svg class="w-[17px] h-[13px]" viewBox="0 0 17 13"><path d="M1.500 6l5 5L15.500 1.500" fill="none" stroke="#fff" stroke-width="3"/></svg></div>
      <div class="w-[28px] pt-[2px] grid place-items-center"><svg class="w-[13px] h-[13px]" viewBox="0 0 13 13"><path d="M1.500 1.500l10 10M11.500 1.500l-10 10" stroke="#c93a25" stroke-width="3.200"/></svg></div>
    </div>
    <div class="pt-[9px] pl-[3px] flex gap-[3px] text-[13px] text-[#666]">
      <div class="w-[213px] h-[24px] border border-[#b4b4b4] bg-white flex items-center justify-between pt-px pl-[6px] pr-[6px]"><span data-w="110">Noto Sans ( Note )</span><svg class="w-[9px] h-[7px]" viewBox="0 0 8 6"><path d="M0 0h8L4 6z" fill="#666"/></svg></div>
      <div class="w-[77px] h-[24px] border border-[#b4b4b4] bg-white flex items-center justify-between pt-px pl-[6px] pr-[6px] text-[13.5px]"><span data-w="46">3.5000</span><svg class="w-[9px] h-[7px]" viewBox="0 0 8 6"><path d="M0 0h8L4 6z" fill="#666"/></svg></div>
    </div>
    <div class="h-[36px] mt-[1px] pl-[4px] flex items-center *:shrink-0 *:flex *:items-center">
      <div class="w-[33.500px] justify-center"><svg class="size-[18px]" viewBox="0 0 18 18" fill="none" stroke="#333" stroke-width="2.500"><path d="M5 3.300h4.500c4 0 4 5.200 0 5.200H5M5 8.500h5c4.500 0 4.500 6.200 0 6.200H5V2.500"/></svg></div>
      <div class="w-[33.500px] justify-center"><svg class="size-[18px]" viewBox="0 0 18 18" fill="none" stroke="#444" stroke-width="1.400"><path d="M7.500 2.500h7M3 15.500h7"/><path d="M11.500 2.500l-5 13" stroke-width="2.300"/></svg></div>
      <div class="w-[33.500px] justify-center"><svg class="size-[18px]" viewBox="0 0 18 18" fill="none" stroke="#333" stroke-width="1.700"><path d="M5 2v6.500c0 5 8 5 8 0V2M3.500 15.800h11.500"/></svg></div>
      <div class="w-[33.500px] justify-center"><svg class="size-[18px]" viewBox="0 0 18 18" fill="none" stroke="#333" stroke-width="1.800"><path d="M13.500 6c0-5-9-5-9-1 0 4.500 9 3 9 7 0 5-9.500 4.500-9.500-1"/><path d="M1 9h16" stroke-width="1.300"/></svg></div>
      <div class="w-[49.250px] pl-[8px]"><svg class="size-[18px]" viewBox="0 0 18 18" stroke="#333" stroke-width="1.700"><path d="M3 3v12.500M.5 5L3 2l2.500 3M7 2.800h11M8 6h8M8 9h10M8 12.200h8M8 15.300h10" fill="none"/></svg><svg class="w-[8px] h-[5px] ml-[6px] text-[#111]"><use href="#caret"/></svg></div>
      <div class="w-[49.250px] pl-[8px]"><svg class="size-[18px]" viewBox="0 0 18 18" stroke="#333" stroke-width="1.900"><path d="M1 3h12M1 6.200h17M1 9.300h12M1 12.400h17M1 15.500h12"/></svg><svg class="w-[8px] h-[5px] ml-[6px] text-[#111]"><use href="#caret"/></svg></div>
      <div class="w-[49.250px] pl-[8px]"><svg class="size-[18px]" viewBox="0 0 18 18" stroke="#bbb" stroke-width="1.700"><path d="M1 3.500h2M5 3.500h12M1 9h2M5 9h12M1 14.500h2M5 14.500h12"/></svg><svg class="w-[8px] h-[5px] ml-[6px] text-[#bbb]"><use href="#caret"/></svg></div>
      <div class="w-[49.250px] pl-[8px]"><svg class="size-[18px]" viewBox="0 0 18 18" stroke="#222" stroke-width="1.900"><path d="M1 9h16M9 1v4M9 13v4"/><path d="M5.500 3.500h7L9 7.500zM5.500 14.500h7L9 10.500z" fill="#222" stroke="none"/></svg><svg class="w-[8px] h-[5px] ml-[6px] text-[#111]"><use href="#caret"/></svg></div>
    </div>
    <div class="h-[34px] pl-[3.500px] flex items-center *:shrink-0 *:flex *:items-center">
      <div class="w-[49.250px] pl-[8px]"><svg class="size-[18px]" viewBox="0 0 18 18" fill="none" stroke="#333" stroke-width="1.900"><ellipse cx="9" cy="9" rx="4" ry="5.500"/><path d="M4.500 16L13.500 2" stroke-width="1.300"/></svg><svg class="w-[8px] h-[5px] ml-[6px] text-[#111]"><use href="#caret"/></svg></div>
      <div class="w-[49.250px] pl-[7px]"><svg class="size-[20px]" viewBox="0 0 20 20" fill="none" stroke="#444" stroke-width="1.300"><path d="M3.500 2.500H1v16h8M12 2.500h7v8"/><path d="M2 .8c4 0 6 1 6 3.500"/><path d="M4.500 3.500h7L8 7.500z" fill="#333" stroke="none"/><path d="M10 12.500h9v6.500h-9zM12 14.700h5M12 16.800h5"/></svg><svg class="w-[8px] h-[5px] ml-[5px] text-[#111]"><use href="#caret"/></svg></div>
      <div class="w-[49.250px] pl-[7px]"><svg class="size-[20px]" viewBox="0 0 20 20" fill="none" stroke="#444" stroke-width="1.300"><path d="M3.500 2.500H1v16h18v-16h-7"/><path d="M2 .8c4 0 6 1 6 3.500"/><path d="M4.500 3.500h7L8 7.500z" fill="#333" stroke="none"/><path d="M10 7l4.500 2.200v5L10 16.500l-4.500-2.300v-5zM5.500 9.200L10 11.500l4.500-2.300M10 11.500v5"/></svg><svg class="w-[8px] h-[5px] ml-[5px] text-[#111]"><use href="#caret"/></svg></div>
      <div class="w-[49.250px] pl-[8px] text-[#b3b3b3]"><div class="w-[18px] text-[14px] font-medium leading-none"><span data-w="17"><span class="underline underline-offset-[3px]">A</span>a</span></div><svg class="w-[8px] h-[5px] ml-[6px]"><use href="#caret"/></svg></div>
      <div class="w-[49.250px] pl-[7px] text-[#b3b3b3]"><svg class="size-[20px]" viewBox="0 0 20 20" fill="none" stroke="#b3b3b3" stroke-width="1.500"><path d="M1 4h15v5M1 4v12h8M4 1.500v4M8.500 1.500v4M13 1.500v4M3 9h2.500M7 9h2.500M3 12.500h2.500M7 12.500h2"/><circle cx="14.500" cy="14.500" r="4"/><path d="M14.500 12v2.500h2"/></svg><svg class="w-[8px] h-[5px] ml-[5px]"><use href="#caret"/></svg></div>
    </div>
  </div>
  <svg class="absolute left-[739px] top-[342px] w-[13px] h-[20px]" viewBox="0 0 13 20"><path d="M1 1v14.500l3.400-3.200 2.400 6 2.500-1-2.500-5.800H11.500z" fill="#fff" stroke="#333" stroke-width="1.100"/></svg>
</div>

<!-- document tabs -->
<div class="h-[31px] shrink-0 bg-[#c9c9c9] flex items-start font-['Inter',sans-serif] text-[14px] text-[#666] whitespace-nowrap *:shrink-0 *:h-[30px] *:flex *:items-center">
  <div class="w-[49px] pl-[18px] pt-[3px]"><svg class="size-[16px]" viewBox="0 0 16 16"><path d="M8 0v16M0 8h16" stroke="#666" stroke-width="3"/></svg></div>
  <div class="w-[165px] mr-[2px] pl-[13px] gap-[4px] bg-[#e8e8e8] rounded-b-[6px]"><svg class="w-[18px] h-[20px]"><use href="#parts"/></svg><span data-w="72">House p 28</span></div>
  <div class="w-[156px] mr-[2px] pl-[11px] gap-[4px] bg-white text-[#333] rounded-b-[4px] border-b-[3px] border-[#1e55b0] pt-[3px]"><svg class="w-[19px] h-[17px]"><use href="#sheet"/></svg><span data-w="64">Drawing 1</span></div>
  <div class="w-[132px] mr-[1.500px] pl-[11px] gap-[4px] bg-[#e8e8e8] rounded-b-[6px]"><svg class="w-[19px] h-[17px]"><use href="#sheet"/></svg><span data-w="41">House</span></div>
  <div class="w-[158px] mr-[1.500px] pl-[13px] gap-[4px] bg-[#e8e8e8] rounded-b-[6px]"><svg class="w-[18px] h-[20px]"><use href="#parts"/></svg><span data-w="65">Prism p29</span></div>
  <div class="w-[148px] mr-[2px] pl-[12px] gap-[4px] bg-[#e8e8e8] rounded-b-[6px]"><svg class="w-[19px] h-[17px]"><use href="#sheet"/></svg><span data-w="56">Hexagon</span></div>
  <div class="w-[173px] mr-[2px] pl-[13px] gap-[4px] bg-[#e8e8e8] rounded-b-[6px]"><svg class="w-[18px] h-[20px]"><use href="#parts"/></svg><span data-w="82">Cylinder p32</span></div>
  <div class="w-[146px] mr-[2px] pl-[12px] gap-[4px] bg-[#e8e8e8] rounded-b-[6px]"><svg class="w-[19px] h-[17px]"><use href="#sheet"/></svg><span data-w="54">Cylinder</span></div>
  <div class="w-[150px] pl-[12px] gap-[5px] bg-[#e8e8e8] rounded-b-[6px]"><svg class="w-[18px] h-[19px]" viewBox="0 0 18 19"><path d="M.8 1h12L17.500 4v14H5.500L.8 15z" fill="#fff" stroke="#333"/><path d="M.8 1l4.700 3.500v13.500L.8 15z" fill="#aaa" stroke="#333"/><path d="M.8 1h12L13 4.500v7H5.500v-7z" fill="#888" stroke="#333"/></svg><span data-w="74">Assembly 1</span></div>
</div>

<script>
  // Spread each label over its nominal width through letter spacing.
  function fitLabels() {
    document.querySelectorAll('[data-w]').forEach(function (el) {
      el.style.display = 'inline-block';
      el.style.whiteSpace = 'pre';
      el.style.letterSpacing = '0px';
      var r = document.createRange();
      r.selectNodeContents(el);
      var natural = r.getBoundingClientRect().width;
      el.style.letterSpacing = ((+el.dataset.w - natural) / el.textContent.length) + 'px';
    });
  }
  fitLabels();
  window.addEventListener('load', fitLabels);
  document.fonts.ready.then(fitLabels);
  setTimeout(fitLabels, 60);
</script>
</body>
</html>
